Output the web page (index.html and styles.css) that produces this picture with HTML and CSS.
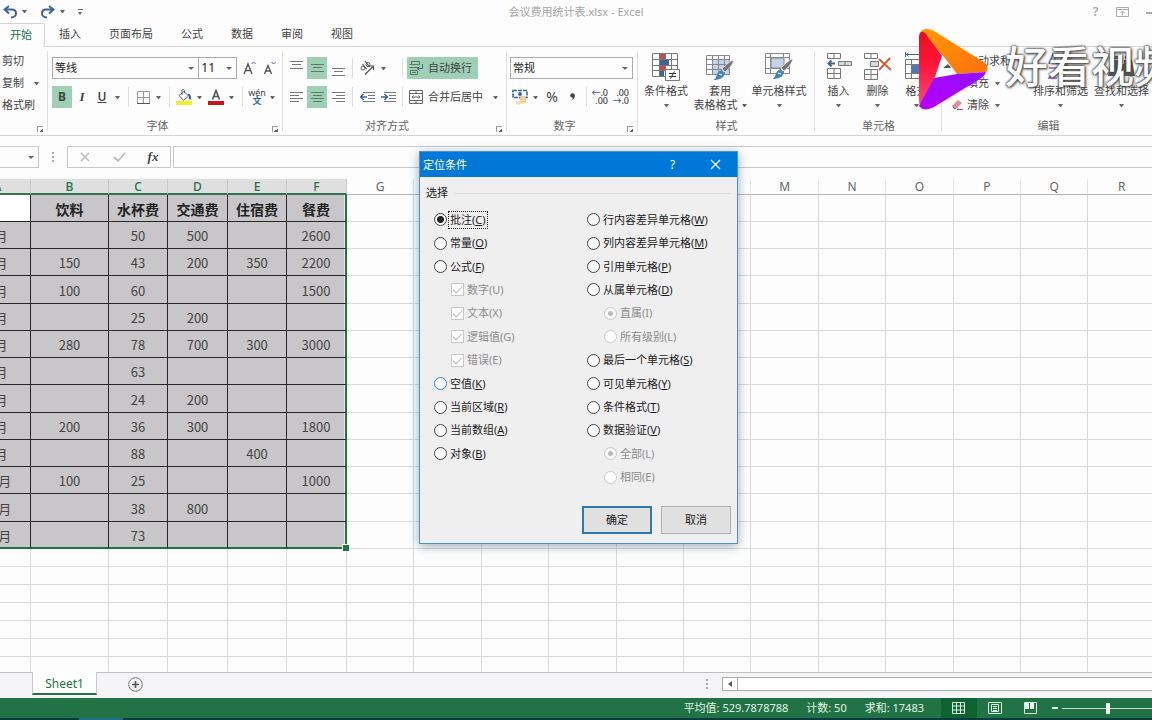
FILE: index.html
```html
<!DOCTYPE html>
<html lang="zh-CN">
<head>
    <meta charset="UTF-8">
    <meta name="viewport" content="width=device-width, initial-scale=1.0">
    <title>会议费用统计表.xlsx - Excel</title>
    <link rel="stylesheet" href="styles.css">
</head>
<body>
    <header class="titlebar">
        <div class="quick">
            <button class="quick-btn" aria-label="撤消"><svg width="16" height="14" viewBox="0 0 16 14" fill="none" stroke="#3f6596" stroke-width="2"><path d="M7 1L2.500 4.500 7 8.500M3 4.500h7c3 0 4 2 4 4s-2 4-5 4"/></svg></button>
            <span class="arrow"></span>
            <button class="quick-btn" aria-label="恢复"><svg width="16" height="14" viewBox="0 0 16 14" fill="none" stroke="#3f6596" stroke-width="2"><path d="M9 1l4.500 3.500L9 8.500M13 4.500H6c-3 0-4 2-4 4s2 4 5 4"/></svg></button>
            <span class="arrow"></span>
            <span class="quick-more"></span>
        </div>
        <div class="doc-title">会议费用统计表.xlsx - Excel</div>
        <div class="window-btns">
            <button class="window-btn" aria-label="帮助">?</button>
            <button class="window-btn" aria-label="功能区显示选项"><svg width="13" height="10" viewBox="0 0 13 10" fill="none" stroke="#aaa"><path d="M.5.5h12v9H.5zM.5 2.500h12M6.500 8.500v-4M4.500 6l2-2 2 2"/></svg></button>
            <button class="window-btn" aria-label="最小化"><svg width="6" height="10" viewBox="0 0 6 10" stroke="#aaa" stroke-width="2"><path d="M0 6h6"/></svg></button>
        </div>
    </header>

    <nav class="tabs">
        <a class="tab active" href="#">开始</a>
        <a class="tab" href="#">插入</a>
        <a class="tab" href="#">页面布局</a>
        <a class="tab" href="#">公式</a>
        <a class="tab" href="#">数据</a>
        <a class="tab" href="#">审阅</a>
        <a class="tab" href="#">视图</a>
    </nav>

    <section class="ribbon">
        <div class="group clipboard">
            <div class="group-body stack">
                <button class="text-btn">剪切</button>
                <button class="text-btn">复制<span class="arrow"></span></button>
                <button class="text-btn">格式刷</button>
            </div>
            <div class="group-foot"><span class="group-name">剪贴板</span><span class="launcher"></span></div>
        </div>

        <div class="group font">
            <div class="group-body">
                <div class="tool-row">
                    <div class="combo font-name"><select aria-label="字体"><option>等线</option></select></div>
                    <div class="combo font-size"><select aria-label="字号"><option>11</option></select></div>
                    <button class="tool grow" aria-label="增大字号"><svg width="14" height="16" viewBox="0 0 14 16" fill="none" stroke="#555"><path d="M1 14L5 4l4 10M2.500 10.500h5" stroke-width="1.400"/><path d="M8.500 4l2-2 2 2" stroke="#3f6596"/></svg></button>
                    <button class="tool" aria-label="减小字号"><svg width="14" height="16" viewBox="0 0 14 16" fill="none" stroke="#555"><path d="M1.500 14L5 5.500 8.500 14M2.500 11h5" stroke-width="1.400"/><path d="M8.500 2l2 2 2-2" stroke="#3f6596"/></svg></button>
                </div>
                <div class="tool-row">
                    <button class="tool on bold">B</button>
                    <button class="tool italic">I</button>
                    <button class="tool underline">U</button>
                    <span class="arrow drop"></span>
                    <span class="sep"></span>
                    <button class="tool" aria-label="边框"><svg width="13" height="13" viewBox="0 0 13 13" fill="none" stroke="#999"><path d="M.5.500v12M6.500.500v12M12.500.500v12M.5.500h12M.5 6.500h12"/><path d="M0 12.500h13" stroke="#555"/></svg></button>
                    <span class="arrow drop"></span>
                    <span class="sep"></span>
                    <button class="tool" aria-label="填充颜色"><svg width="16" height="16" viewBox="0 0 16 16" fill="none"><path d="M0 12h16v4H0z" fill="#f5ee2c"/><path d="M3 6.500l5-4 4.500 4.500-5 4.500L3 6.500z" fill="#fff" stroke="#666"/><path d="M6 6V1.500c0-1.500 2.500-1.500 2.500 0V4" stroke="#666"/><path d="M12 5.500c2.500 1 2.500 3 1.500 5" stroke="#3f6596" stroke-width="2"/></svg></button>
                    <span class="arrow drop"></span>
                    <button class="tool" aria-label="字体颜色"><svg width="16" height="16" viewBox="0 0 16 16" fill="none"><path d="M0 12h16v4H0z" fill="#c8161d"/><path d="M4.500 10.500L8 1.500l3.500 9M5.500 7.500h5" stroke="#555" stroke-width="1.600"/></svg></button>
                    <span class="arrow drop"></span>
                    <span class="sep"></span>
                    <button class="tool pinyin"><span>wén</span><b>文</b></button>
                    <span class="arrow drop"></span>
                </div>
            </div>
            <div class="group-foot"><span class="group-name">字体</span><span class="launcher"></span></div>
        </div>

        <div class="group align">
            <div class="group-body">
                <div class="tool-row spaced">
                    <button class="tool" aria-label="顶端对齐"><svg width="13" height="16" viewBox="0 0 13 16" stroke="#777"><path d="M0 1.500h13M2 4.500h9M0 8.500h13" /></svg></button>
                    <button class="tool on" aria-label="垂直居中"><svg width="13" height="16" viewBox="0 0 13 16" stroke="#5b7a6a"><path d="M0 4.500h13M2 7.500h9M0 11.500h13"/></svg></button>
                    <button class="tool" aria-label="底端对齐"><svg width="13" height="16" viewBox="0 0 13 16" stroke="#777"><path d="M0 8.500h13M2 11.500h9M0 15.500h13"/></svg></button>
                    <span class="sep"></span>
                    <button class="tool" aria-label="方向"><svg width="16" height="16" viewBox="0 0 16 16" fill="none" stroke="#555"><circle cx="4" cy="8" r="2"/><path d="M3.500 4l4 5M6 1l4.500 6M6 14.500L14 6.500M14.500 10V6h-4" stroke-width="1.200"/><circle cx="9" cy="4.500" r="2"/></svg></button>
                    <span class="arrow drop wide"></span>
                    <span class="sep"></span>
                    <button class="label-tool on"><svg width="16" height="16" viewBox="0 0 16 16" fill="none" stroke="#5b7a6a"><path d="M3.500 1.500h8v3h-8zM1.500 4.500h9M1.500 7.500h9M2.500 10.500h7v4h-7zM4 12.500h4"/><path d="M14.500 4v4.500h-5M11.500 6.500l-2 2 2 2" stroke="#3f6596"/></svg>自动换行</button>
                </div>
                <div class="tool-row spaced">
                    <button class="tool" aria-label="左对齐"><svg width="13" height="13" viewBox="0 0 13 13" stroke="#777"><path d="M0 1.500h13M0 4.500h9M0 7.500h13M0 10.500h9"/></svg></button>
                    <button class="tool on" aria-label="居中"><svg width="13" height="13" viewBox="0 0 13 13" stroke="#5b7a6a"><path d="M0 1.500h13M2 4.500h9M0 7.500h13M2 10.500h9"/></svg></button>
                    <button class="tool" aria-label="右对齐"><svg width="13" height="13" viewBox="0 0 13 13" stroke="#777"><path d="M0 1.500h13M4 4.500h9M0 7.500h13M4 10.500h9"/></svg></button>
                    <span class="sep"></span>
                    <button class="tool" aria-label="减少缩进量"><svg width="15" height="13" viewBox="0 0 15 13" fill="none" stroke="#777"><path d="M3 1.500h12M8 4.500h7M8 7.500h7M3 10.500h12"/><path d="M0 6h7M3.500 3L.7 6l2.800 3" stroke="#3f6596" stroke-width="1.500"/></svg></button>
                    <button class="tool" aria-label="增加缩进量"><svg width="15" height="13" viewBox="0 0 15 13" fill="none" stroke="#777"><path d="M3 1.500h12M8 4.500h7M8 7.500h7M3 10.500h12"/><path d="M0 6h7M3.500 3l2.800 3-2.800 3" stroke="#3f6596" stroke-width="1.500"/></svg></button>
                    <span class="sep"></span>
                    <button class="label-tool"><svg width="16" height="16" viewBox="0 0 16 16" fill="none" stroke="#666"><path d="M1.500 1.500h13v13h-13zM1.500 4.500h13M1.500 11.500h13M8 1.500v3M8 11.500v3M4 8h8M5.500 6.500L4 8l1.500 1.500M10.500 6.500L12 8l-1.500 1.500"/></svg>合并后居中</button>
                    <span class="arrow drop"></span>
                </div>
            </div>
            <div class="group-foot"><span class="group-name">对齐方式</span><span class="launcher"></span></div>
        </div>

        <div class="group number">
            <div class="group-body">
                <div class="tool-row">
                    <div class="combo number-format"><select aria-label="数字格式"><option>常规</option></select></div>
                </div>
                <div class="tool-row">
                    <button class="tool" aria-label="会计数字格式"><svg width="16" height="16" viewBox="0 0 16 16" fill="none"><path d="M1 1.500h14v7H1z" stroke="#3f6596" stroke-width="1.600" stroke-dasharray="4 1"/><circle cx="8" cy="5" r="2" fill="#3f6596"/><path d="M8 9c0-2 6-2 6 0v4c0 2-6 2-6 0z" fill="#f0cf94"/><path d="M4 13c0-1.500 5-1.500 5 0v1.500c0 1.500-5 1.500-5 0z" fill="#f3dcae"/></svg></button>
                    <span class="arrow drop"></span>
                    <button class="tool percent">%</button>
                    <button class="tool comma" aria-label="千位分隔样式"><svg width="5" height="8" viewBox="0 0 5 8"><circle cx="2.500" cy="2.500" r="2.300" fill="#444"/><path d="M4.800 2.500c0 2.500-1.300 4.500-3.800 5 1.500-1 2-2 1.800-3.500z" fill="#444"/></svg></button>
                    <span class="sep"></span>
                    <button class="tool decimals"><span><i>←</i>.0</span><span>.00</span></button>
                    <button class="tool decimals"><span>.00</span><span><i>→</i>.0</span></button>
                </div>
            </div>
            <div class="group-foot"><span class="group-name">数字</span><span class="launcher"></span></div>
        </div>

        <div class="group styles">
            <div class="group-body big-row">
                <button class="big">
                    <svg width="28" height="29" viewBox="0 0 28 29" fill="none" stroke="#777"><path d="M.5 1.500h25v23H.5zM.5 7.500h25M.5 13.500h25M.5 18.500h25M7.500 1.500v23M13.500 1.500v23M19.500 1.500v23"/><path d="M8 2h5v5H8zM8 14h6v4H8z" fill="#c0504d" stroke="none"/><path d="M8 8h9v5H8zM8 19h4v5H8z" fill="#3f6596" stroke="none"/><path d="M13.500 17.500h14v11h-14z" fill="#fff"/><path d="M17 21.500h7M17 24.500h7M22.500 19.500l-4 7" stroke="#333"/></svg>
                    <span>条件格式</span><span class="arrow"></span>
                </button>
                <button class="big">
                    <svg width="28" height="29" viewBox="0 0 28 29" fill="none" stroke="#888"><path d="M7 8h17v14H7z" fill="#c5d3ea" stroke="none"/><path d="M.5 3.500h23v19H.5zM.5 7.500h23M.5 12.500h23M.5 17.500h23M6.500 3.500v19M12.500 3.500v19M18.500 3.500v19"/><path d="M27.500 8c0 4-4 8-8.500 12l-3-3c4-4 8-8 11.500-9z" fill="#777" stroke="#fff" stroke-width=".6"/><path d="M15.500 18l3 3c0 5-5 7-11 7 4-2 2-8 8-10z" fill="#4584b4" stroke="none"/><path d="M13 22l3 1" stroke="#fff"/></svg>
                    <span>套用</span><span class="nowrap">表格格式<span class="arrow"></span></span>
                </button>
                <button class="big">
                    <svg width="28" height="29" viewBox="0 0 28 29" fill="none" stroke="#888"><path d="M.5 1.500h24v20H.5zM.5 5.500h24M.5 16.500h24M5.500 1.500v20M18.500 1.500v20"/><path d="M6 6h13v10H6z" fill="#c5d3ea"/><path d="M27.500 7c0 4-4 8-8.500 12l-3-3c4-4 8-8 11.500-9z" fill="#777" stroke="#fff" stroke-width=".6"/><path d="M15.500 17l3 3c0 5-5 7-11 7 4-2 2-8 8-10z" fill="#4584b4" stroke="none"/><path d="M13 21l3 1" stroke="#fff"/></svg>
                    <span>单元格样式</span><span class="arrow"></span>
                </button>
            </div>
            <div class="group-foot"><span class="group-name">样式</span></div>
        </div>

        <div class="group cells">
            <div class="group-body big-row">
                <button class="big">
                    <svg width="26" height="29" viewBox="0 0 26 29" fill="none" stroke="#777"><path d="M1.500 1.500h13v5h-13zM8 1.500v5M1.500 16.500h13v10h-13zM1.500 21.500h13M8 16.500v10"/><path d="M12.500 9.500h13v4h-13zM19 9.500v4" fill="#d5dae0"/><path d="M2 11.500h7M5.500 8.500L2.500 11.500l3 3" stroke="#3f6596" stroke-width="2"/></svg>
                    <span>插入</span><span class="arrow"></span>
                </button>
                <button class="big">
                    <svg width="28" height="29" viewBox="0 0 28 29" fill="none" stroke="#777"><path d="M.5 1.500h13v5H.5zM7 1.500v5M.5 17.500h13v10H.5zM.5 22.500h13M7 17.500v10"/><path d="M6.500 9.500h8v5h-8z" fill="#d5dae0"/><path d="M15 7l12 11M26 6L15 18" stroke="#d2603a" stroke-width="2"/></svg>
                    <span>删除</span><span class="arrow"></span>
                </button>
                <button class="big">
                    <svg width="26" height="29" viewBox="0 0 26 29" fill="none" stroke="#777"><path d="M1.500 0v5M1 2.500h22M4.500.500l-2 2 2 2" stroke="#3f6596"/><path d="M1.500 7.500h23v19h-23zM1.500 12.500h23M1.500 21.500h23M7.500 7.500v19M18.500 7.500v19"/><path d="M8 13h10v8H8z" fill="#4a7ab8" stroke="none"/></svg>
                    <span>格式</span><span class="arrow"></span>
                </button>
            </div>
            <div class="group-foot"><span class="group-name">单元格</span></div>
        </div>

        <div class="group editing">
            <div class="group-body big-row">
                <div class="stack edit-list">
                    <button class="text-btn"><svg width="12" height="12" viewBox="0 0 12 12" fill="none" stroke="#555" stroke-width="1.500"><path d="M10 2H2l4 4-4 4h8"/></svg>自动求和<span class="arrow"></span></button>
                    <button class="text-btn"><svg width="12" height="12" viewBox="0 0 12 12" fill="none" stroke="#3f6596"><path d="M1.500 1.500h9v9h-9zM6 3v5M4 6l2 2 2-2"/></svg>填充<span class="arrow"></span></button>
                    <button class="text-btn"><svg width="12" height="12" viewBox="0 0 12 12"><path d="M1 7l6-6 4 3-6 6H3z" fill="#e58a9a"/><path d="M1 7l4 3H3z" fill="#a9526a"/><path d="M6 10.500h6" stroke="#a9526a"/></svg>清除<span class="arrow"></span></button>
                </div>
                <button class="big sort">
                    <svg width="28" height="29" viewBox="0 0 28 29" fill="none" stroke-width="1.500"><path d="M2 12L6 2l4 10M3.500 8.500h5" stroke="#3f6596"/><path d="M2 16h8L2 26h8" stroke="#8a5aa8"/><path d="M13 6h13l-5 7v9l-3-3v-6z" fill="#999"/></svg>
                    <span>排序和筛选</span><span class="arrow"></span>
                </button>
                <button class="big find">
                    <svg width="28" height="29" viewBox="0 0 28 29" fill="#555"><path d="M3 8h8v4h5V8h8l3 16H16v-6h-5v6H0z"/><path d="M5 4h5v3H5zM17 4h5v3h-5z"/></svg>
                    <span>查找和选择</span><span class="arrow"></span>
                </button>
            </div>
            <div class="group-foot"><span class="group-name">编辑</span></div>
        </div>
    </section>

    <section class="formula-bar">
        <div class="name-box combo"><input type="text" aria-label="名称框"></div>
        <span class="dots"></span>
        <div class="formula-btns">
            <button class="formula-btn" aria-label="取消"><svg width="10" height="10" viewBox="0 0 10 10" stroke="#bbb" stroke-width="1.500"><path d="M1 1l8 8M9 1L1 9"/></svg></button>
            <button class="formula-btn" aria-label="输入"><svg width="13" height="10" viewBox="0 0 13 10" fill="none" stroke="#bbb" stroke-width="1.800"><path d="M1 5l4 4 7-8"/></svg></button>
            <button class="formula-btn fx">fx</button>
        </div>
        <input class="formula-input" type="text" aria-label="编辑栏">
    </section>

    <main class="sheet">
        <table class="grid">
            <colgroup>
                <col class="col-a"><col class="col-b"><col class="col-c"><col class="col-d"><col class="col-e"><col class="col-f">
                <col span="12">
            </colgroup>
            <thead>
                <tr><th class="picked">A</th><th class="picked">B</th><th class="picked">C</th><th class="picked">D</th><th class="picked">E</th><th class="picked">F</th><th>G</th><th>H</th><th>I</th><th>J</th><th>K</th><th>L</th><th>M</th><th>N</th><th>O</th><th>P</th><th>Q</th><th>R</th></tr>
            </thead>
            <tbody class="data" id="data"></tbody>
            <tbody class="blank" id="blank"></tbody>
        </table>
    </main>

    <footer class="sheet-tabs">
        <a class="sheet-tab" href="#">Sheet1</a>
        <button class="add-sheet" aria-label="新工作表"><svg width="15" height="15" viewBox="0 0 15 15" fill="none" stroke="#777"><circle cx="7.500" cy="7.500" r="6.800"/><path d="M7.500 4v7M4 7.500h7" stroke="#555" stroke-width="1.600"/></svg></button>
        <span class="dots"></span>
        <div class="scrollbar"><button class="scroll-left" aria-label="向左滚动"></button></div>
    </footer>

    <footer class="status">
        <div class="stats"><span>平均值: 529.7878788</span><span>计数: 50</span><span>求和: 17483</span></div>
        <button class="view-btn current" aria-label="普通"><svg width="14" height="12" viewBox="0 0 14 12" fill="none" stroke="#d9efe0"><path d="M.5.500h12v11H.5zM.5 4h12M.5 8h12M4.500.500v11M8.500.500v11"/></svg></button>
        <button class="view-btn" aria-label="页面布局"><svg width="14" height="12" viewBox="0 0 14 12" fill="none" stroke="#d9efe0"><path d="M.5.500h13v11H.5zM3.500 2.500h7v7h-7zM5 4.500h4M5 6.500h4M5 8.500h4"/></svg></button>
        <button class="view-btn" aria-label="分页预览"><svg width="14" height="12" viewBox="0 0 14 12" fill="none" stroke="#d9efe0"><path d="M.5.500h12v11H.5z"/><path d="M1 1h4v6H1zM6 1h4v6H6z" fill="#e8f6ec" stroke="none"/></svg></button>
        <span class="minus"></span>
        <input class="zoom" type="range" min="0" max="100" value="51" aria-label="缩放">
    </footer>
    <div class="taskbar"><span></span></div>

    <form class="dialog" role="dialog" aria-labelledby="dialog-title">
        <div class="dialog-bar">
            <span id="dialog-title">定位条件</span>
            <button type="button" class="dialog-btn">?</button>
            <button type="button" class="dialog-btn" aria-label="关闭"><svg width="11" height="11" viewBox="0 0 11 11" stroke="#fff" stroke-width="1.200"><path d="M1 1l9 9M10 1l-9 9"/></svg></button>
        </div>
        <div class="dialog-head">选择</div>
        <div class="options">
            <div class="option-col">
                <label><input type="radio" name="goto" checked><span class="focus">批注(<u>C</u>)</span></label>
                <label><input type="radio" name="goto"><span>常量(<u>O</u>)</span></label>
                <label><input type="radio" name="goto"><span>公式(<u>F</u>)</span></label>
                <label class="sub"><input type="checkbox" checked disabled><span>数字(U)</span></label>
                <label class="sub"><input type="checkbox" checked disabled><span>文本(X)</span></label>
                <label class="sub"><input type="checkbox" checked disabled><span>逻辑值(G)</span></label>
                <label class="sub"><input type="checkbox" checked disabled><span>错误(E)</span></label>
                <label><input class="hot" type="radio" name="goto"><span>空值(<u>K</u>)</span></label>
                <label><input type="radio" name="goto"><span>当前区域(<u>R</u>)</span></label>
                <label><input type="radio" name="goto"><span>当前数组(<u>A</u>)</span></label>
                <label><input type="radio" name="goto"><span>对象(<u>B</u>)</span></label>
            </div>
            <div class="option-col">
                <label><input type="radio" name="goto"><span>行内容差异单元格(<u>W</u>)</span></label>
                <label><input type="radio" name="goto"><span>列内容差异单元格(<u>M</u>)</span></label>
                <label><input type="radio" name="goto"><span>引用单元格(<u>P</u>)</span></label>
                <label><input type="radio" name="goto"><span>从属单元格(<u>D</u>)</span></label>
                <label class="sub"><input type="radio" name="level" checked disabled><span>直属(I)</span></label>
                <label class="sub"><input type="radio" name="level" disabled><span>所有级别(L)</span></label>
                <label><input type="radio" name="goto"><span>最后一个单元格(<u>S</u>)</span></label>
                <label><input type="radio" name="goto"><span>可见单元格(<u>Y</u>)</span></label>
                <label><input type="radio" name="goto"><span>条件格式(<u>T</u>)</span></label>
                <label><input type="radio" name="goto"><span>数据验证(<u>V</u>)</span></label>
                <label class="sub"><input type="radio" name="valid" checked disabled><span>全部(L)</span></label>
                <label class="sub"><input type="radio" name="valid" disabled><span>相同(E)</span></label>
            </div>
        </div>
        <div class="dialog-foot">
            <button type="button" class="push default">确定</button>
            <button type="button" class="push">取消</button>
        </div>
    </form>

    <div class="watermark">
        <svg width="72" height="82" viewBox="0 0 72 82">
            <defs>
                <linearGradient id="red" x1="0" y1="0" x2="0" y2="1"><stop offset="0" stop-color="#e81020"/><stop offset=".4" stop-color="#ff1238"/><stop offset="1" stop-color="#ff4a78"/></linearGradient>
                <linearGradient id="orange" x1="0" y1="0" x2="1" y2="1"><stop offset="0" stop-color="#ff9a00"/><stop offset="1" stop-color="#ff7010"/></linearGradient>
                <linearGradient id="purple" x1="0" y1="1" x2="1" y2="0"><stop offset="0" stop-color="#b800ff"/><stop offset="1" stop-color="#9210ff"/></linearGradient>
            </defs>
            <path d="M25 26L42 47 17 51z" fill="#fff"/>
            <path d="M3 5C5 0 12 0 17 3l48 30c6 4 7 7 4 11l-29 2L27 29z" fill="url(#orange)"/>
            <path d="M3 5c3-3 6 0 8 4l14 19-7 21L4 79C2 77 2 74 2 70V10c0-2 0-4 1-5z" fill="url(#red)"/>
            <path d="M17 50l23-4 29-2c-1 3-3 5-6 7L17 79c-6 3-11 4-15-1z" fill="url(#purple)"/>
            <path d="M26 40l5-4 3 4z" fill="#555"/>
        </svg>
        <span>好看视频</span>
    </div>

    <script>
        const rows = [
            ['', '饮料', '水杯费', '交通费', '住宿费', '餐费'],
            ['1月', '', 50, 500, '', 2600],
            ['2月', 150, 43, 200, 350, 2200],
            ['3月', 100, 60, '', '', 1500],
            ['4月', '', 25, 200, '', ''],
            ['5月', 280, 78, 700, 300, 3000],
            ['6月', '', 63, '', '', ''],
            ['7月', '', 24, 200, '', ''],
            ['8月', 200, 36, 300, '', 1800],
            ['9月', '', 88, '', 400, ''],
            ['10月', 100, 25, '', '', 1000],
            ['11月', '', 38, 800, '', ''],
            ['12月', '', 73, '', '', '']
        ];

        document.getElementById('data').innerHTML = rows.map(row =>
            '<tr>' + row.map(value => `<td class="cell">${value}</td>`).join('') + '<td></td>'.repeat(12) + '</tr>'
        ).join('');
        document.getElementById('blank').innerHTML = ('<tr>' + '<td></td>'.repeat(18) + '</tr>').repeat(7);
    </script>
</body>
</html>
```
FILE: styles.css
```css
:root {
    --green: #217346;
    --on: #9fd0b6;
    --line: #d4d4d4;
    --text: #444;
    --blue: #0078d7;
}

* {
    margin: 0;
    padding: 0;
    box-sizing: border-box;
}

body {
    font-family: "Noto Sans", "Noto Sans CJK SC", sans-serif;
    font-size: 11px;
    line-height: 16px;
    color: var(--text);
    background: #fdfdfd;
    height: 100vh;
    display: flex;
    flex-direction: column;
    overflow: hidden;
    position: relative;
}

button, input, select {
    font: inherit;
    color: inherit;
    background: none;
    border: none;
    border-radius: 0;
}

a {
    color: inherit;
    text-decoration: none;
}

svg {
    flex: none;
    display: block;
}

.arrow {
    flex: none;
    display: inline-block;
    width: 5px;
    border: solid transparent;
    border-width: 3px 2px 0;
    border-top-color: #666;
}

/* title bar */
.titlebar {
    flex: none;
    height: 23px;
    display: grid;
    grid-template-columns: 1fr auto 1fr;
    align-items: center;
    color: #a5a5a5;
}

.quick {
    display: flex;
    align-items: center;
    gap: 4px;
    padding-left: 2px;
    height: 20px;
}

.quick .arrow {
    margin-right: 9px;
}

.quick-more {
    width: 5px;
    height: 6px;
    border-top: 1px solid #666;
    display: flex;
    align-items: flex-end;
}

.quick-more::after {
    content: "";
    border: solid transparent;
    border-width: 3px 2px 0;
    border-top-color: #666;
}

.window-btns {
    display: flex;
    justify-content: flex-end;
}

.window-btn {
    width: 27px;
    height: 20px;
    display: flex;
    align-items: center;
    justify-content: center;
    font-size: 12px;
    font-weight: 600;
}

.window-btn:last-child {
    justify-content: flex-end;
    width: 16px;
}

/* ribbon tabs */
.tabs {
    flex: none;
    height: 24px;
    display: flex;
    border-bottom: 1px solid var(--line);
}

.tab {
    height: 24px;
    padding: 0 14px;
    line-height: 22px;
}

.tab.active {
    color: var(--green);
    background: #fdfdfd;
    padding: 0 12px 0 10px;
    border: solid var(--line);
    border-width: 1px 1px 0 0;
    line-height: 21px;
}

/* ribbon */
.ribbon {
    flex: none;
    height: 89px;
    display: flex;
    border-bottom: 1px solid var(--line);
    overflow: hidden;
}

.group {
    flex: none;
    display: flex;
    flex-direction: column;
    position: relative;
}

.group:not(:last-child)::after {
    content: "";
    position: absolute;
    right: 0;
    top: 4px;
    bottom: 4px;
    width: 1px;
    background: #e0e0e0;
}

.group-body {
    height: 70px;
    padding: 10px 3px 0;
}

.group-foot {
    display: flex;
    align-items: center;
    height: 18px;
}

.group-name {
    flex: 1;
    text-align: center;
    color: #666;
}

.launcher {
    width: 6px;
    height: 6px;
    margin: 5px 5px 0;
    border: solid #999;
    border-width: 1px 0 0 1px;
    background: linear-gradient(135deg, transparent 60%, #666 60%);
}

.clipboard {
    width: 124px;
    margin-left: -76px;
}

.clipboard .group-body {
    padding-left: 78px;
}

.stack {
    display: flex;
    flex-direction: column;
}

.group-body.stack {
    padding-top: 3px;
}

.text-btn {
    height: 22px;
    display: flex;
    align-items: center;
    white-space: nowrap;
}

.text-btn .arrow {
    margin-left: 10px;
}

.font {
    width: 235px;
}

.font .group-body {
    padding-left: 4px;
}

.align {
    width: 224px;
}

.number {
    width: 131px;
}

.styles {
    width: 177px;
}

.cells {
    width: 127px;
}

.editing {
    flex: 1 0 210px;
}

.tool-row {
    display: flex;
    align-items: center;
    height: 22px;
    margin-bottom: 7px;
}

.tool-row.spaced {
    gap: 1px;
}

.combo {
    position: relative;
    height: 22px;
    border: 1px solid #ababab;
}

.combo::after {
    content: "";
    position: absolute;
    right: 4px;
    top: 9px;
    border: solid transparent;
    border-width: 3px 3px 0;
    border-top-color: #666;
}

.combo select {
    appearance: none;
    width: 100%;
    height: 20px;
    padding-left: 2px;
    color: #222;
    outline: none;
}

.font-name {
    width: 148px;
}

.font-size {
    width: 38px;
    border-left: none;
}

.font-size select {
    font-size: 12px;
}

.number-format {
    width: 123px;
}

.tool {
    width: 20px;
    height: 22px;
    display: flex;
    align-items: center;
    justify-content: center;
}

.grow {
    margin-left: 3px;
}

.on {
    background: var(--on);
}

.bold {
    font-size: 12px;
    font-weight: 700;
}

.italic {
    font-family: "Liberation Serif", serif;
    font-style: italic;
    font-weight: 700;
    font-size: 13px;
}

.underline {
    font-size: 12px;
    font-weight: 600;
    text-decoration: underline;
}

.drop {
    margin: 0 4px 0 3px;
}

.drop.wide {
    margin-right: 12px;
}

.sep {
    width: 1px;
    height: 20px;
    margin: 0 4px;
    background: #e0e0e0;
}

.spaced .sep {
    margin: 0 3px;
}

.pinyin {
    flex-direction: column;
    font-size: 9px;
    line-height: 8px;
}

.pinyin b {
    color: #3f6596;
}

.label-tool {
    height: 22px;
    display: flex;
    align-items: center;
    gap: 4px;
    padding: 0 6px 0 1px;
    white-space: nowrap;
}

.percent {
    font-size: 14px;
}

.decimals {
    flex-direction: column;
    align-items: flex-end;
    padding-right: 3px;
    font-size: 9px;
    line-height: 8px;
    font-weight: 500;
}

.decimals + .decimals {
    margin-left: 1px;
}

.decimals span {
    display: flex;
}

.decimals i {
    font-style: normal;
    color: #3f6596;
}

.big-row {
    display: flex;
    padding-top: 5px;
}

.big {
    flex: none;
    width: 54px;
    display: flex;
    flex-direction: column;
    align-items: center;
    line-height: 14px;
    white-space: nowrap;
}

.big svg {
    margin-bottom: 3px;
}

.big > .arrow {
    margin-top: 6px;
}

.nowrap {
    padding-left: 0;
}

.nowrap .arrow {
    margin: 0 0 2px 4px;
}

.styles .big:last-child {
    width: 64px;
}

.styles .big-row {
    padding-left: 1px;
}

.cells .big {
    width: 39px;
}

.cells .big-row {
    padding-left: 4px;
}

.edit-list {
    width: 85px;
    padding-left: 6px;
    margin-top: -2px;
}

.edit-list .text-btn {
    gap: 4px;
}

.edit-list .arrow {
    margin-left: 2px;
}

.big.sort,
.big.find {
    width: 61px;
}

/* formula bar */
.formula-bar {
    flex: none;
    height: 43px;
    padding: 10px 0 11px;
    display: flex;
    align-items: stretch;
}

.name-box {
    width: 39px;
    border-left: none;
}

.name-box input {
    width: 100%;
    height: 20px;
}

.dots {
    width: 2px;
    height: 10px;
    margin: auto 13px;
    background: repeating-linear-gradient(#aaa 0 2px, transparent 2px 4px);
}

.formula-btns {
    width: 104px;
    display: flex;
    justify-content: space-around;
    border: 1px solid #c8c8c8;
}

.name-box,
.formula-input {
    border-color: #c8c8c8;
}

.formula-btn {
    width: 34px;
    display: flex;
    align-items: center;
    justify-content: center;
}

.fx {
    font: italic 700 13px "Liberation Serif", serif;
}

.formula-input {
    flex: 1;
    min-width: 0;
    margin-left: 2px;
    border: 1px solid #c8c8c8;
    border-right: none;
}

/* worksheet */
.sheet {
    flex: 1;
    min-height: 0;
    overflow: hidden;
}

.grid {
    width: calc(100% + 39px);
    margin-left: -35px;
    table-layout: fixed;
    border-collapse: separate;
    border-spacing: 0;
    text-align: center;
}

.col-a { width: 66px; }
.col-b { width: 78px; }
.col-c { width: 59px; }
.col-d { width: 60px; }
.col-e { width: 59px; }
.col-f { width: 60px; }

.grid th {
    height: 16px;
    line-height: 14px;
    font-size: 12px;
    font-weight: 400;
    color: #666;
    border-right: 1px solid #e4e4e4;
    border-bottom: 1px solid #b5b5b5;
}

.grid .picked {
    color: var(--green);
    background: #e0dfe0;
    border-right-color: #c8c8c8;
    border-bottom: 2px solid #2f7350;
    line-height: 13px;
    font-weight: 500;
}

.grid td {
    border-right: 1px solid #dadada;
    border-bottom: 1px solid #dadada;
}

.data td {
    height: 27px;
    padding-top: 2px;
    line-height: 20px;
    font-family: "Noto Sans CJK SC", sans-serif;
    font-size: 13px;
}

.data tr:nth-child(4n) td {
    height: 28px;
}

.data .cell {
    background: #c8c6c8;
    border-color: #262626;
}

.data tr:first-child .cell {
    font-size: 14px;
    font-weight: 700;
    color: #222;
}

.data tr:first-child .cell:first-child {
    background: #fff;
}

.data tr:last-child .cell {
    border-bottom: 2px solid var(--green);
}

.data .cell:nth-child(6) {
    position: relative;
    border-right: 2px solid var(--green);
    box-shadow: inset -1px 0 #e6e6e6;
}

/* fill handle on the corner of the selection */
.data tr:last-child .cell:nth-child(6)::after {
    content: "";
    position: absolute;
    right: -4px;
    bottom: -4px;
    width: 6px;
    height: 6px;
    background: var(--green);
    border: solid #fff;
    border-width: 1px 0 0 1px;
}

.blank td {
    height: 18px;
}

/* sheet tabs */
.sheet-tabs {
    flex: none;
    height: 26px;
    display: flex;
    padding-bottom: 3px;
    background: #f5f4f6;
    border-top: 1px solid #c0c0c0;
}

.sheet-tab {
    width: 65px;
    margin: -1px 0 0 32px;
    border: 1px solid #c8c8c8;
    border-top: none;
    border-bottom: 2px solid var(--green);
    background: #fff;
    color: var(--green);
    font-size: 12px;
    line-height: 23px;
    text-align: center;
}

.add-sheet {
    width: 77px;
    display: flex;
    align-items: center;
    justify-content: center;
}

.sheet-tabs .dots {
    margin: auto 14px auto auto;
}

.scrollbar {
    width: 430px;
    height: 14px;
    margin: auto 0;
    border: 1px solid #ababab;
    border-right: none;
    background: #fff;
}

.scroll-left {
    width: 15px;
    height: 12px;
    border-right: 1px solid #ababab;
    display: flex;
    align-items: center;
    justify-content: center;
}

.scroll-left::after {
    content: "";
    border: solid transparent;
    border-width: 3px 4px 3px 0;
    border-right-color: #555;
}

/* status bar */
.status {
    flex: none;
    height: 20px;
    display: flex;
    align-items: center;
    justify-content: flex-end;
    background: var(--green);
    color: #e2f3e8;
}

.stats {
    display: flex;
    gap: 18px;
    margin-right: 17px;
}

.view-btn {
    width: 36px;
    height: 20px;
    display: flex;
    align-items: center;
    justify-content: center;
}

.current {
    background: #0f6232;
}

.minus {
    width: 6px;
    height: 2px;
    margin: 0 4px 0 3px;
    background: #e2f3e8;
}

.zoom {
    appearance: none;
    width: 90px;
    height: 20px;
    background: linear-gradient(#c5e0cf, #c5e0cf) center / 100% 1px no-repeat;
}

.zoom::-webkit-slider-thumb {
    appearance: none;
    width: 4px;
    height: 11px;
    background: #f0faf3;
}

.taskbar {
    flex: none;
    height: 2px;
    padding-left: 79px;
    background: #0a3b40;
}

.taskbar span {
    display: block;
    width: 44px;
    height: 2px;
    background: #1b6f80;
}

/* go to special dialog */
.dialog {
    position: absolute;
    left: 419px;
    top: 151px;
    width: 319px;
    height: 393px;
    display: flex;
    flex-direction: column;
    background: #f0eff0;
    border: 1px solid #4a94c8;
    box-shadow: 0 2px 10px rgba(40, 70, 100, 0.45);
    color: #1a1a1a;
}

.dialog-bar {
    flex: none;
    height: 25px;
    display: flex;
    align-items: center;
    padding-left: 3px;
    background: var(--blue);
    color: #fff;
}

.dialog-bar span {
    flex: 1;
}

.dialog-btn {
    width: 43px;
    height: 24px;
    display: flex;
    align-items: center;
    justify-content: center;
    font-size: 12px;
}

.dialog-head {
    display: flex;
    align-items: center;
    gap: 7px;
    padding: 8px 6px 7px;
}

.dialog-head::after {
    content: "";
    flex: 1;
    height: 1px;
    background: #dcdcdc;
}

.options {
    flex: 1;
    display: grid;
    grid-template-columns: 153px 1fr;
    padding-left: 14px;
}

.option-col {
    display: grid;
    grid-template-rows: repeat(12, 1fr);
}

.option-col label {
    display: flex;
    align-items: center;
    gap: 2px;
    white-space: nowrap;
}

.option-col label span {
    padding: 0 1px;
    border: 1px solid transparent;
    margin-left: -1px;
}

.option-col .focus {
    border: 1px dotted #222;
}

.option-col .sub {
    padding-left: 17px;
    color: #8c8c8c;
}

.option-col input {
    appearance: none;
    width: 13px;
    height: 13px;
    border: 1px solid #444;
    background: #fff;
}

.option-col input[type="radio"] {
    border-radius: 50%;
}

.option-col input[type="radio"]:checked {
    background: radial-gradient(circle, #222 3px, #fff 4px);
}

.option-col input:disabled {
    border-color: #c8c8c8;
}

.option-col input[type="radio"]:checked:disabled {
    background: radial-gradient(circle, #bbb 2px, #fafafa 3px);
}

.option-col input.hot {
    border-color: #2a86c8;
}

.option-col input[type="checkbox"]:checked::after {
    content: "";
    display: block;
    width: 8px;
    height: 4px;
    margin: 2px 0 0 1px;
    border: solid #b5b5b5;
    border-width: 0 0 1px 1px;
    transform: rotate(-45deg);
}

.dialog-foot {
    flex: none;
    display: flex;
    justify-content: flex-end;
    gap: 9px;
    padding: 17px 6px 9px;
}

.push {
    width: 70px;
    height: 28px;
    background: #e1e0e1;
    border: 1px solid #b0aeb0;
}

.push.default {
    border: 2px solid #2a7ab8;
}

/* channel watermark */
.watermark {
    position: absolute;
    left: 917px;
    top: 28px;
    width: calc(100% - 917px);
    display: flex;
    align-items: flex-start;
    gap: 16px;
    overflow: hidden;
    font-family: "Noto Sans CJK SC", sans-serif;
    font-size: 43px;
    font-weight: 500;
    line-height: 72px;
    color: #fff;
    white-space: nowrap;
    text-shadow: 0 0 2px #333, 0 0 3px #444, 1px 1px 3px #555;
}
```
